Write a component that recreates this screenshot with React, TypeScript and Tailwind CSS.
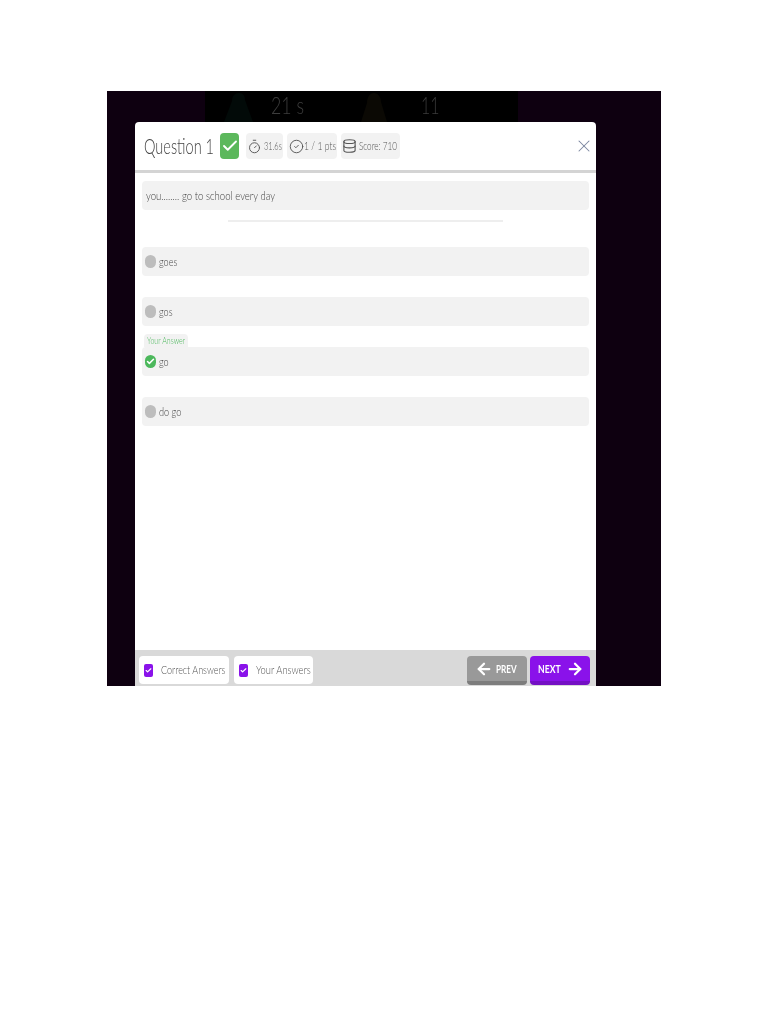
import React from 'react';
import { Check, ArrowLeft, ArrowRight, Timer, CircleCheck, Database, X } from 'lucide-react';

const font = "font-['Lato','Noto_Sans',sans-serif]";

// the source shot is squeezed sideways, so labels get a narrow transform
function Narrow({ children, className = '' }: { children: React.ReactNode; className?: string }) {
  return <span className={`inline-block shrink-0 origin-left whitespace-nowrap ${className}`}>{children}</span>;
}

function Chip({ icon, label, className, textClass }: { icon: React.ReactNode; label: string; className: string; textClass: string }) {
  return (
    <div className={`flex h-[26px] shrink-0 items-center rounded bg-[#f2f2f2] ${className}`}>
      {icon}
      <Narrow className={`text-[12px] font-light text-[#555] ${textClass}`}>{label}</Narrow>
    </div>
  );
}

function Option({ label, className = '', selected = false }: { label: string; className?: string; selected?: boolean }) {
  return (
    <div className={`flex h-[29px] items-center rounded-sm bg-[#f2f2f2] pl-[3px] ${className}`}>
      {selected ? (
        <span className="flex h-[13px] w-[11px] shrink-0 items-center justify-center rounded-full bg-[#4cb85c]">
          <Check className="h-[9px] w-[9px] shrink-0 text-white" strokeWidth={4} />
        </span>
      ) : (
        <span className="h-[13px] w-[11px] shrink-0 rounded-full bg-[#bdbdbd]" />
      )}
      <Narrow className="ml-[3px] scale-x-[0.76] text-[12px] font-light text-[#444]">{label}</Narrow>
    </div>
  );
}

function Toggle({ label, className, textClass }: { label: string; className: string; textClass: string }) {
  return (
    <div className={`flex h-[28px] shrink-0 items-center rounded-sm bg-white pl-[5px] ${className}`}>
      <span className="flex h-[13px] w-[9px] shrink-0 items-center justify-center rounded-[2px] bg-[#8a12ea]">
        <Check className="h-[7px] w-[7px] shrink-0 text-white" strokeWidth={4} />
      </span>
      <Narrow className={`text-[12px] font-light text-[#555] ${textClass}`}>{label}</Narrow>
    </div>
  );
}

export default function App() {
  return (
    <div className={`min-h-[1024px] bg-white pl-[107px] pt-[91px] ${font}`}>
      <div className="flex h-[595px] w-[554px] flex-col bg-[#0e0010] blur-[0.5px]">
        {/* game header behind the dialog */}
        <div className="ml-[98px] flex h-[31px] w-[313px] shrink-0 bg-black">
          <svg className="ml-[17px] mt-[2px] h-[29px] w-[33px] shrink-0" viewBox="0 0 33 29">
            <path d="M10 8c0-5 3-8 7-8s6 3 6 7l8 22H2z" fill="#020a08" />
          </svg>
          <Narrow className="ml-[16px] h-[30px] scale-x-[0.74] text-[24px] leading-[28px] font-light text-[#3d3d3d]">21 s</Narrow>
          <svg className="ml-[43px] mt-[2px] h-[29px] w-[30px] shrink-0" viewBox="0 0 30 29">
            <path d="M8 10c0-6 3-10 7-10s7 4 7 9l6 20H2z" fill="#0b0904" />
          </svg>
          <Narrow className="ml-[32px] h-[30px] scale-x-[0.66] text-[24px] leading-[28px] font-light text-[#3d3d3d]">11</Narrow>
        </div>

        <div className="ml-[28px] flex w-[461px] flex-1 flex-col overflow-hidden rounded-t-[4px] bg-white">
          <header className="flex h-[51px] shrink-0 items-start border-b-[3px] border-[#d4d4d4] pt-[11px] pl-[9px] pr-[2px]">
            <Narrow className="w-[76px] scale-x-[0.66] text-[22px] leading-[26px] font-light text-[#444]">Question 1</Narrow>
            <span className="flex h-[26px] w-[19px] shrink-0 items-center justify-center rounded-sm bg-[#5cb85c]">
              <Check className="h-[22px] w-[18px] shrink-0 text-white" strokeWidth={2.5} />
            </span>
            <div className="ml-[7px] flex gap-[4px]">
              <Chip className="w-[37px] pl-[1px]" textClass="ml-[2px] scale-x-[0.62]" label="31.6s" icon={<Timer className="h-[19px] w-[15px] shrink-0 text-[#555]" strokeWidth={1.5} />} />
              <Chip className="w-[50px] pl-[2px]" textClass="ml-[0px] scale-x-[0.72]" label="1 / 1 pts" icon={<CircleCheck className="h-[19px] w-[15px] shrink-0 text-[#555]" strokeWidth={1.5} />} />
              <Chip className="w-[59px] pl-[1px]" textClass="ml-[2px] scale-x-[0.68]" label="Score: 710" icon={<Database className="h-[18px] w-[15px] shrink-0 text-[#555]" strokeWidth={1.75} />} />
            </div>
            <X className="ml-auto -mt-[1px] h-[28px] w-[20px] shrink-0 text-[#7b86a0]" strokeWidth={1.25} />
          </header>

          <main className="flex-1 px-[7px] pt-[8px]">
            <div className="flex h-[29px] items-center rounded-sm bg-[#f2f2f2] pl-[4px]">
              <Narrow className="scale-x-[0.8] text-[12px] font-light text-[#444]">you........ go to school every day</Narrow>
            </div>
            <div className="mx-auto mt-[10px] mb-[25px] h-[2px] w-[275px] bg-[#eeeeee]" />
            <Option label="goes" className="mb-[21px]" />
            <Option label="gos" className="mb-[8px]" />
            <div className="ml-[2px] flex h-[13px] w-[44px] items-center rounded-t-sm bg-[#f2f2f2] pl-[3px]">
              <Narrow className="scale-x-[0.78] text-[9px] font-light text-[#4cb85c]">Your Answer</Narrow>
            </div>
            <Option label="go" selected className="mb-[21px]" />
            <Option label="do go" />
          </main>

          <footer className="flex h-[36px] shrink-0 items-start bg-[#d9d9d9] pl-[4px] pt-[6px] pr-[6px]">
            <div className="flex gap-[5px]">
              <Toggle label="Correct Answers" className="w-[90px]" textClass="ml-[8px] scale-x-[0.75]" />
              <Toggle label="Your Answers" className="w-[79px]" textClass="ml-[8px] scale-x-[0.78]" />
            </div>
            <div className="ml-auto flex gap-[3px]">
              <button className="flex h-[29px] w-[60px] items-center rounded-sm border-b-[4px] border-[#7d7d7d] bg-[#999999] pl-[8px] text-white">
                <ArrowLeft className="h-[20px] w-[18px] shrink-0" strokeWidth={3} />
                <Narrow className="ml-[3px] scale-x-[0.68] text-[12px] font-bold">PREV</Narrow>
              </button>
              <button className="flex h-[29px] w-[60px] items-center rounded-sm border-b-[4px] border-[#7410c4] bg-[#8a12ea] pl-[8px] text-white">
                <Narrow className="w-[28px] scale-x-[0.72] text-[12px] font-bold">NEXT</Narrow>
                <ArrowRight className="h-[20px] w-[18px] shrink-0" strokeWidth={3} />
              </button>
            </div>
          </footer>
        </div>
      </div>
    </div>
  );
}
